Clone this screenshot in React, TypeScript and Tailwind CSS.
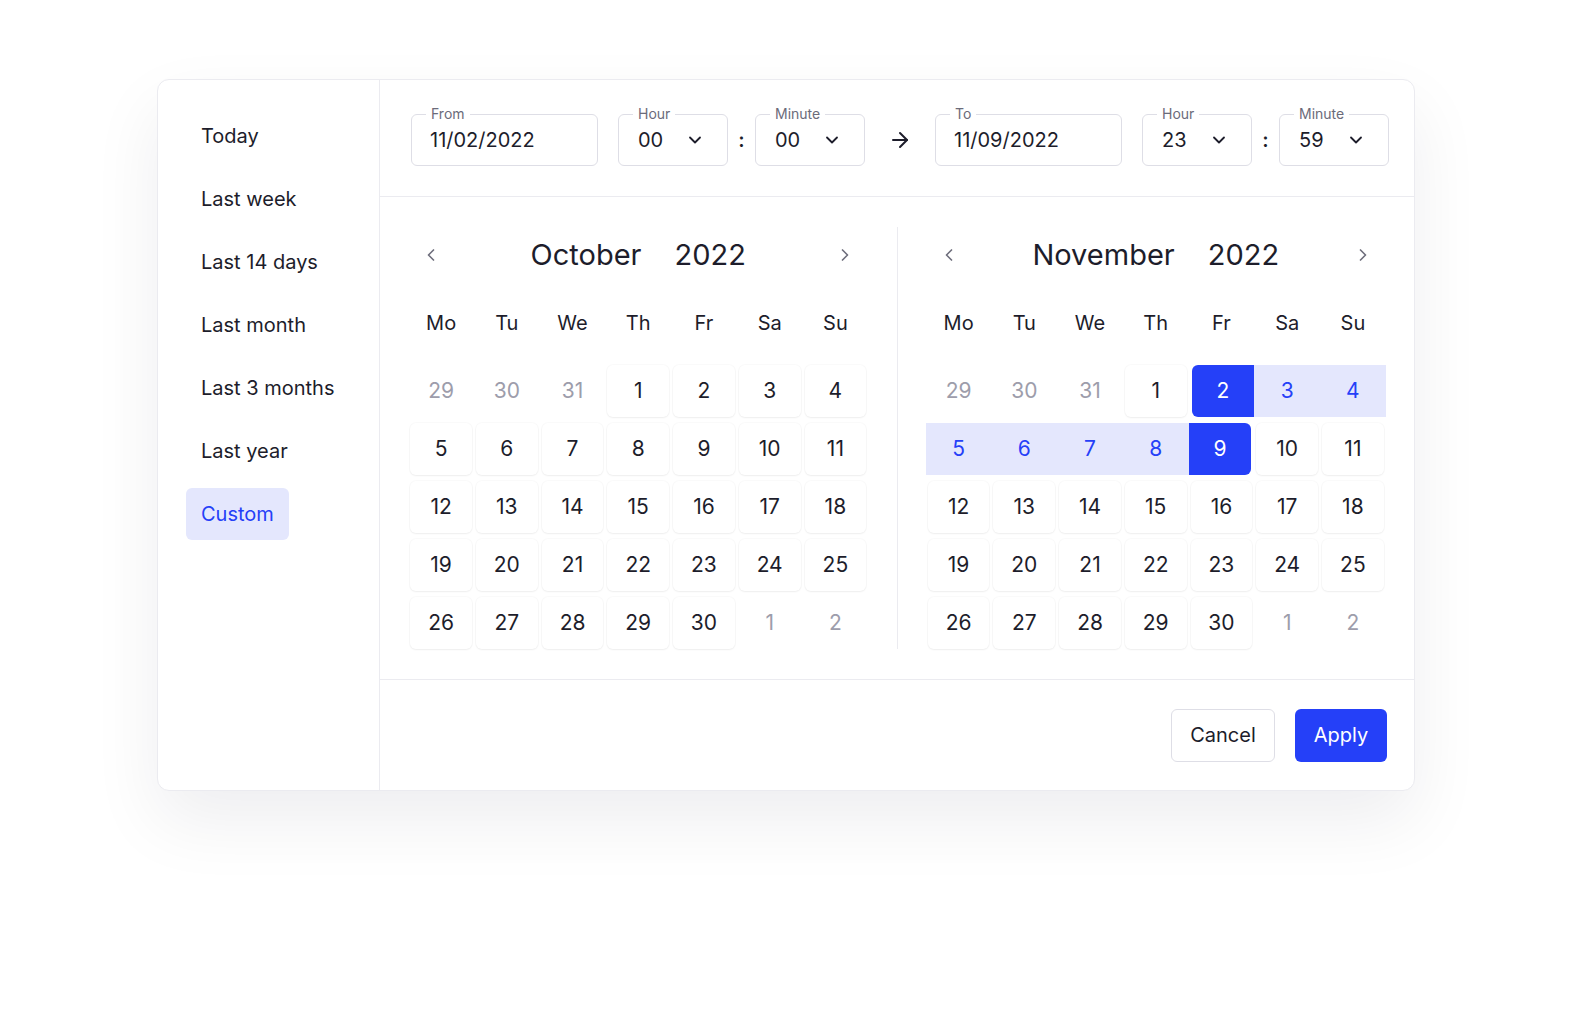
import React from "react";
import {ArrowRight, ChevronDown, ChevronLeft, ChevronRight} from "lucide-react";

type Day = {d: number; muted?: boolean; state?: "start" | "end" | "range"};

const presets = ["Today", "Last week", "Last 14 days", "Last month", "Last 3 months", "Last year", "Custom"];
const weekdays = ["Mo", "Tu", "We", "Th", "Fr", "Sa", "Su"];

function monthDays(lead: number[], count: number, trail: number[]): Day[] {
  const out: Day[] = lead.map((d) => ({d, muted: true}));
  for (let i = 1; i <= count; i++) out.push({d: i});
  trail.forEach((d) => out.push({d, muted: true}));
  return out;
}

const october = monthDays([29, 30, 31], 30, [1, 2]);
const november = monthDays([29, 30, 31], 30, [1, 2]).map((day) => {
  if (day.muted) return day;
  if (day.d === 2) return {...day, state: "start" as const};
  if (day.d === 9) return {...day, state: "end" as const};
  if (day.d > 2 && day.d < 9) return {...day, state: "range" as const};
  return day;
});

function Field({label, value, wide}: {label: string; value: string; wide?: boolean}) {
  return (
    <div
      className={`relative h-[52px] border border-[#dedee6] rounded-md flex items-center justify-between ${
        wide ? "w-[187px] pl-[18px]" : "w-[110px] pl-[19px] pr-[22px]"
      }`}
    >
      <span className="absolute -top-[11px] left-[14px] bg-white px-[5px] text-[14px] leading-[20px] text-[#6b6b7a]">
        {label}
      </span>
      <span className="text-[20px] text-[#1d1d2b]">{value}</span>
      {!wide && <ChevronDown size={20} strokeWidth={2.2} className="text-[#1d1d2b]" />}
    </div>
  );
}

function Colon() {
  return <div className="w-[27px] flex justify-center text-[20px] font-semibold text-[#1d1d2b]">:</div>;
}

function DayCell({day}: {day: Day}) {
  if (day.muted) {
    return <div className="h-[52px] flex items-center justify-center text-[21px] text-[#9d9dab]">{day.d}</div>;
  }
  if (day.state === "start") {
    return (
      <div className="h-[52px] flex pl-[3px]">
        <div className="flex-1 rounded-l-md bg-[#2540f8] text-white flex items-center justify-center text-[21px]">
          {day.d}
        </div>
      </div>
    );
  }
  if (day.state === "end") {
    return (
      <div className="h-[52px] flex pr-[3px]">
        <div className="flex-1 rounded-r-md bg-[#2540f8] text-white flex items-center justify-center text-[21px]">
          {day.d}
        </div>
      </div>
    );
  }
  if (day.state === "range") {
    return (
      <div className="h-[52px] bg-[#e4e7fd] text-[#2540f8] flex items-center justify-center text-[21px]">{day.d}</div>
    );
  }
  return (
    <div className="h-[52px] flex px-[2px]">
      <div className="flex-1 rounded-md bg-white shadow-[0_0_0_1px_rgba(0,0,0,0.02),0_1px_2px_rgba(0,0,0,0.05)] flex items-center justify-center text-[21px] text-[#1d1d2b]">
        {day.d}
      </div>
    </div>
  );
}

function Month({name, days}: {name: string; days: Day[]}) {
  return (
    <div className="flex-1 flex justify-center">
      <div className="w-[460px] flex flex-col pt-[6px]">
        <div className="h-[44px] flex items-center justify-between px-[13px]">
          <ChevronLeft size={20} strokeWidth={2} className="text-[#6e6e7c]" />
          <div className="flex gap-[33px] text-[29px] text-[#1d1d2b]">
            <span>{name}</span>
            <span>2022</span>
          </div>
          <ChevronRight size={20} strokeWidth={2} className="text-[#6e6e7c]" />
        </div>
        <div className="mt-[27px] h-[40px] grid grid-cols-7 items-center text-center text-[20px] text-[#1d1d2b]">
          {weekdays.map((w) => (
            <span key={w}>{w}</span>
          ))}
        </div>
        <div className="mt-[23px] grid grid-cols-7 gap-y-[6px]">
          {days.map((day, i) => (
            <DayCell key={i} day={day} />
          ))}
        </div>
      </div>
    </div>
  );
}

export default function App() {
  return (
    <div
      className="w-full h-[1026px] overflow-hidden bg-white pt-[79px] pl-[157px]"
      style={{fontFamily: "Inter, 'Noto Sans', sans-serif"}}
    >
      <div className="w-[1258px] h-[712px] flex rounded-xl border border-[#ebebf0] bg-white shadow-[0_30px_70px_rgba(20,20,40,0.07)]">
        <aside className="w-[222px] shrink-0 border-r border-[#ebebf0] pl-[28px] pt-[30px] flex flex-col gap-[11px]">
          {presets.map((p) => (
            <div
              key={p}
              className={`w-fit h-[52px] px-[15px] flex items-center rounded-md text-[20px] ${
                p === "Custom" ? "bg-[#e4e7fd] text-[#2540f8]" : "text-[#1d1d2b]"
              }`}
            >
              {p}
            </div>
          ))}
        </aside>
        <main className="flex-1 flex flex-col">
          <div className="h-[117px] shrink-0 border-b border-[#ebebf0] flex items-center pl-[31px] pt-[4px]">
            <Field label="From" value="11/02/2022" wide />
            <div className="w-[20px]" />
            <Field label="Hour" value="00" />
            <Colon />
            <Field label="Minute" value="00" />
            <div className="w-[70px] flex justify-center">
              <ArrowRight size={24} strokeWidth={2} className="text-[#1d1d2b]" />
            </div>
            <Field label="To" value="11/09/2022" wide />
            <div className="w-[20px]" />
            <Field label="Hour" value="23" />
            <Colon />
            <Field label="Minute" value="59" />
          </div>
          <div className="h-[483px] shrink-0 border-b border-[#ebebf0] flex py-[30px]">
            <Month name="October" days={october} />
            <div className="w-px bg-[#ebebf0]" />
            <Month name="November" days={november} />
          </div>
          <div className="flex-1 flex items-center justify-end gap-[20px] pr-[27px]">
            <button className="w-[104px] h-[53px] rounded-md border border-[#dedee6] text-[20px] text-[#1d1d2b]">
              Cancel
            </button>
            <button className="w-[92px] h-[53px] rounded-md bg-[#2540f8] text-[20px] text-white">Apply</button>
          </div>
        </main>
      </div>
    </div>
  );
}
